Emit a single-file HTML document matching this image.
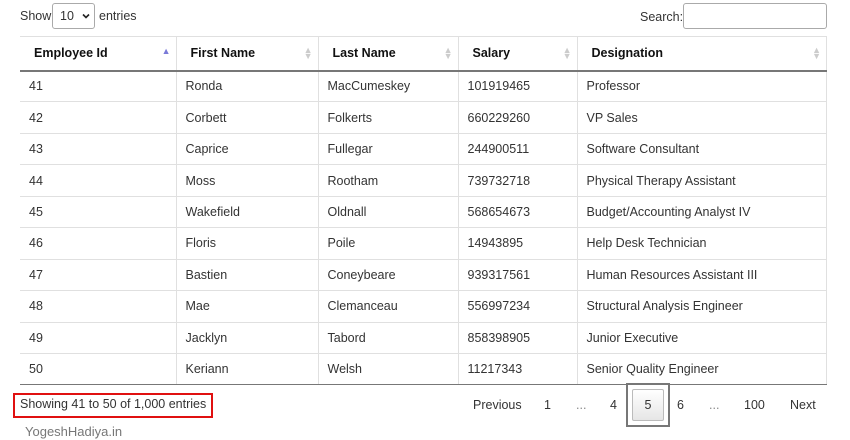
<!DOCTYPE html>
<html><head><style>
*{box-sizing:border-box;margin:0;padding:0}
body{width:850px;height:440px;background:#fff;font-family:"Liberation Sans",sans-serif;font-size:12.5px;color:#333;position:relative;overflow:hidden}
.a{position:absolute;white-space:nowrap}
table{position:absolute;left:20px;top:36px;width:807px;border-collapse:collapse}
th{height:34px;text-align:left;font-weight:bold;color:#111;border-top:1px solid #e0e0e0;border-left:1px solid #e0e0e0;border-bottom:2px solid #777;padding-left:14px;position:relative;font-size:12.5px}
td{height:31.45px;border-left:1px solid #e0e0e0;border-bottom:1px solid #e0e0e0;padding-left:9px}
tr td:first-child,tr th:first-child{border-left:none}
tr:last-child td{border-bottom:1px solid #777}
th:last-child,td:last-child{border-right:1px solid #e0e0e0}
.s{position:absolute;right:5px;top:10px;font-size:9px;line-height:6px;color:#ccc}
</style></head><body>
<div class="a" style="left:20px;top:9px">Show</div>
<div class="a" style="left:52px;top:3px;width:43px;height:26px;border:1px solid #aaa;border-radius:3px;padding:5px 0 0 7px">10
<svg style="position:absolute;left:29px;top:9px" width="8" height="6" viewBox="0 0 8 6"><path d="M1 1.5L4 4.5L7 1.5" stroke="#222" stroke-width="1.6" fill="none"/></svg></div>
<div class="a" style="left:99px;top:9px">entries</div>
<div class="a" style="left:640px;top:10px">Search:</div>
<div class="a" style="left:683px;top:3px;width:144px;height:26px;border:1px solid #aaa;border-radius:3px"></div>
<table>
<tr><th style="width:156px">Employee Id<span class="s" style="color:#7a7ad8;top:11px">&#9650;</span></th><th style="width:142px">First Name<span class="s">&#9650;<br>&#9660;</span></th><th style="width:140px">Last Name<span class="s">&#9650;<br>&#9660;</span></th><th style="width:119px">Salary<span class="s">&#9650;<br>&#9660;</span></th><th>Designation<span class="s">&#9650;<br>&#9660;</span></th></tr>
<tr><td>41</td><td>Ronda</td><td>MacCumeskey</td><td>101919465</td><td>Professor</td></tr>
<tr><td>42</td><td>Corbett</td><td>Folkerts</td><td>660229260</td><td>VP Sales</td></tr>
<tr><td>43</td><td>Caprice</td><td>Fullegar</td><td>244900511</td><td>Software Consultant</td></tr>
<tr><td>44</td><td>Moss</td><td>Rootham</td><td>739732718</td><td>Physical Therapy Assistant</td></tr>
<tr><td>45</td><td>Wakefield</td><td>Oldnall</td><td>568654673</td><td>Budget/Accounting Analyst IV</td></tr>
<tr><td>46</td><td>Floris</td><td>Poile</td><td>14943895</td><td>Help Desk Technician</td></tr>
<tr><td>47</td><td>Bastien</td><td>Coneybeare</td><td>939317561</td><td>Human Resources Assistant III</td></tr>
<tr><td>48</td><td>Mae</td><td>Clemanceau</td><td>556997234</td><td>Structural Analysis Engineer</td></tr>
<tr><td>49</td><td>Jacklyn</td><td>Tabord</td><td>858398905</td><td>Junior Executive</td></tr>
<tr><td>50</td><td>Keriann</td><td>Welsh</td><td>11217343</td><td>Senior Quality Engineer</td></tr>
</table>
<div class="a" style="left:13px;top:393px;width:200px;height:25px;border:2px solid #e01010"></div>
<div class="a" style="left:20px;top:397px">Showing 41 to 50 of 1,000 entries</div>
<div class="a" style="left:25px;top:424px;color:#777;font-size:13px">YogeshHadiya.in</div>
<div class="a" style="left:473px;top:398px">Previous</div>
<div class="a" style="left:544px;top:398px">1</div>
<div class="a" style="left:576px;top:398px;color:#888">...</div>
<div class="a" style="left:610px;top:398px">4</div>
<div class="a" style="left:626px;top:383px;width:44px;height:44px;border:2px solid #777"></div>
<div class="a" style="left:632px;top:389px;width:32px;height:32px;border:1px solid #bbb;border-radius:2px;background:linear-gradient(#fff,#e6e6e6);text-align:center;line-height:30px">5</div>
<div class="a" style="left:677px;top:398px">6</div>
<div class="a" style="left:709px;top:398px;color:#888">...</div>
<div class="a" style="left:744px;top:398px">100</div>
<div class="a" style="left:790px;top:398px">Next</div>
</body></html>
